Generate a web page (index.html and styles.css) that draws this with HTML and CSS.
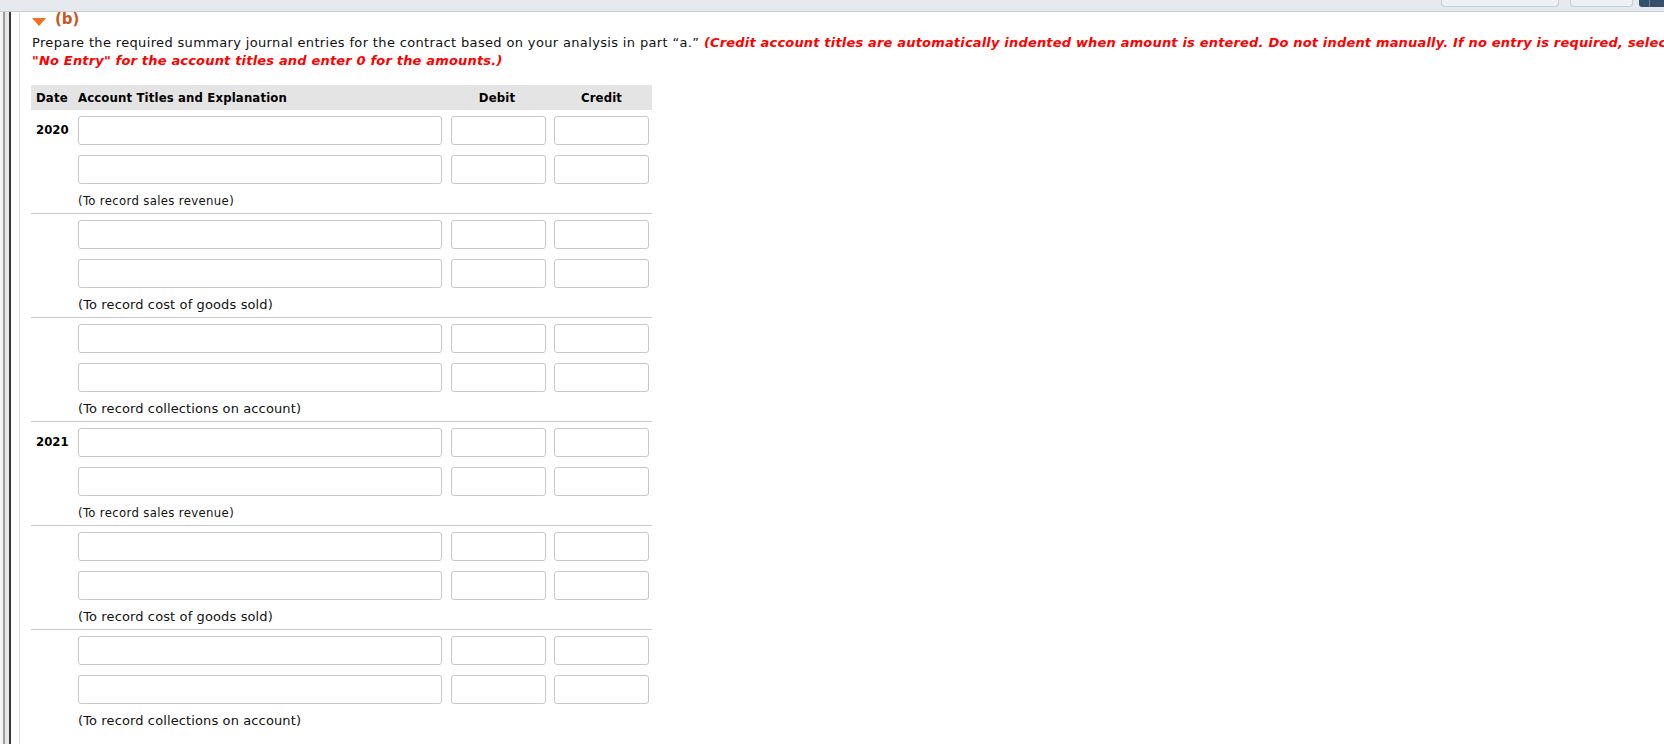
FILE: index.html
```html
<!DOCTYPE html>
<html lang="en">
<head>
<meta charset="utf-8">
<title>Journal entries - part (b)</title>
<link rel="stylesheet" href="styles.css">
</head>
<body>
<div class="topbar">
  <div class="tb-actions">
    <span class="tb-btn tb-btn-wide"></span>
    <span class="tb-btn tb-btn-narrow"></span>
    <span class="tb-dark"></span>
  </div>
</div>
<div class="main">
  <div class="rail"></div>
  <div class="content">
    <div class="part-title">
      <svg class="caret" width="14" height="8" viewBox="0 0 14 8" aria-hidden="true"><polygon points="0,0 14,0 7,8" fill="#f36f21"/></svg>
      <span class="part-label">(b)</span>
    </div>
    <p class="instructions">Prepare the required summary journal entries for the contract based on your analysis in part “a.” <em class="note">(Credit account titles are automatically indented when amount is entered. Do not indent manually. If no entry is required, select<br>"No Entry" for the account titles and enter 0 for the amounts.)</em></p>

    <div class="journal">
      <div class="jhead">
        <span class="h-date">Date</span>
        <span class="h-acct">Account Titles and Explanation</span>
        <span class="h-debit">Debit</span>
        <span class="h-credit">Credit</span>
      </div>

      <div class="jgroup">
        <div class="jrow"><span class="year">2020</span><input class="in-acct" type="text"><input class="in-amt" type="text"><input class="in-amt" type="text"></div>
        <div class="jrow"><span class="year"></span><input class="in-acct" type="text"><input class="in-amt" type="text"><input class="in-amt" type="text"></div>
        <div class="caption caption-narrow">(To record sales revenue)</div>
      </div>
      <div class="jgroup">
        <div class="jrow"><span class="year"></span><input class="in-acct" type="text"><input class="in-amt" type="text"><input class="in-amt" type="text"></div>
        <div class="jrow"><span class="year"></span><input class="in-acct" type="text"><input class="in-amt" type="text"><input class="in-amt" type="text"></div>
        <div class="caption">(To record cost of goods sold)</div>
      </div>
      <div class="jgroup">
        <div class="jrow"><span class="year"></span><input class="in-acct" type="text"><input class="in-amt" type="text"><input class="in-amt" type="text"></div>
        <div class="jrow"><span class="year"></span><input class="in-acct" type="text"><input class="in-amt" type="text"><input class="in-amt" type="text"></div>
        <div class="caption">(To record collections on account)</div>
      </div>
      <div class="jgroup">
        <div class="jrow"><span class="year">2021</span><input class="in-acct" type="text"><input class="in-amt" type="text"><input class="in-amt" type="text"></div>
        <div class="jrow"><span class="year"></span><input class="in-acct" type="text"><input class="in-amt" type="text"><input class="in-amt" type="text"></div>
        <div class="caption caption-narrow">(To record sales revenue)</div>
      </div>
      <div class="jgroup">
        <div class="jrow"><span class="year"></span><input class="in-acct" type="text"><input class="in-amt" type="text"><input class="in-amt" type="text"></div>
        <div class="jrow"><span class="year"></span><input class="in-acct" type="text"><input class="in-amt" type="text"><input class="in-amt" type="text"></div>
        <div class="caption">(To record cost of goods sold)</div>
      </div>
      <div class="jgroup">
        <div class="jrow"><span class="year"></span><input class="in-acct" type="text"><input class="in-amt" type="text"><input class="in-amt" type="text"></div>
        <div class="jrow"><span class="year"></span><input class="in-acct" type="text"><input class="in-amt" type="text"><input class="in-amt" type="text"></div>
        <div class="caption">(To record collections on account)</div>
      </div>
    </div>
  </div>
</div>
</body>
</html>
```

FILE: styles.css
```css
html, body {
  margin: 0;
  padding: 0;
  overflow: hidden;
  background: #ffffff;
}

body {
  width: 1664px;
  height: 744px;
  display: flex;
  flex-direction: column;
  font-family: "DejaVu Sans", Verdana, sans-serif;
  color: #111111;
}

/* top application bar */
.topbar {
  height: 11px;
  flex: none;
  background: #e6eaef;
  border-bottom: 1px solid #c6ced8;
  display: flex;
  justify-content: flex-end;
}

.tb-actions {
  display: flex;
  align-items: flex-start;
}

.tb-btn {
  height: 6px;
  background: #eef1f4;
  border: 1px solid #c3cbd4;
  border-top: none;
  border-radius: 0 0 4px 4px;
}

.tb-btn-wide {
  width: 116px;
  margin-right: 11px;
}

.tb-btn-narrow {
  width: 61px;
  margin-right: 6px;
}

.tb-dark {
  width: 25px;
  height: 7px;
  background: linear-gradient(to right, #34506b 0, #34506b 10px, #6b8196 10px, #6b8196 11px, #34506b 11px);
  border-radius: 0 0 0 3px;
}

/* main area */
.main {
  flex: 1;
  display: flex;
  min-height: 0;
}

.rail {
  width: 20px;
  flex: none;
  background: linear-gradient(to right,
    #f3f3f3 0, #f3f3f3 3px,
    #9c9c9c 3px, #9c9c9c 5px,
    #e6e6e6 5px, #e6e6e6 9px,
    #3a3a3a 9px, #3a3a3a 11px,
    #ffffff 11px, #ffffff 19px,
    #d9dfe7 19px, #d9dfe7 20px);
}

.content {
  padding-left: 11px;
  flex: 1;
  min-width: 0;
}

.part-title {
  display: flex;
  align-items: flex-start;
  height: 15px;
  line-height: 15px;
}

.caret {
  display: block;
  margin-top: 6px;
  margin-left: 1px;
  margin-right: 9px;
}

.part-label {
  font-family: "DejaVu Sans", Verdana, sans-serif;
  font-weight: bold;
  font-size: 15px;
  color: #c9581b;
}

.instructions {
  margin: 7px 0 0 1px;
  font-size: 13px;
  line-height: 18px;
  letter-spacing: 0.35px;
  white-space: nowrap;
  color: #111111;
}

.note {
  color: #ff0000;
  font-weight: bold;
  font-style: italic;
  letter-spacing: 0.18px;
}

/* journal table */
.journal {
  width: 621px;
  margin-top: 15px;
  font-family: "DejaVu Sans Condensed", "DejaVu Sans", Tahoma, sans-serif;
  font-size: 13px;
  color: #111111;
}

.jhead,
.jrow {
  display: grid;
  grid-template-columns: 47px 373px 103px 98px;
}

.jhead {
  height: 25px;
  line-height: 25px;
  background: #e4e4e4;
  font-weight: bold;
  letter-spacing: 0.15px;
  color: #000000;
}

.h-date {
  padding-left: 5px;
}

.h-acct {
  padding-left: 0;
}

.h-debit {
  text-align: center;
  padding-right: 11px;
}

.h-credit {
  text-align: center;
  padding-right: 3px;
}

.jgroup {
  padding-top: 6px;
  border-bottom: 1px solid #cacaca;
}

.jgroup:last-child {
  border-bottom: none;
}

.jrow + .jrow {
  margin-top: 10px;
}

.year {
  padding-left: 5px;
  font-weight: bold;
  line-height: 27px;
  color: #000000;
}

.jrow input {
  box-sizing: border-box;
  height: 29px;
  margin: 0;
  padding: 0 4px;
  border: 1px solid #c9c9c9;
  border-radius: 3px;
  background: #ffffff;
  font: inherit;
  outline: none;
}

.in-acct {
  width: 364px;
}

.in-amt {
  width: 95px;
}

.caption {
  padding: 8px 0 3px 47px;
  line-height: 18px;
  font-family: "DejaVu Sans", Verdana, sans-serif;
  letter-spacing: 0.12px;
}

.caption-narrow {
  font-family: "DejaVu Sans Condensed", "DejaVu Sans", Tahoma, sans-serif;
  letter-spacing: 0.35px;
}
```
